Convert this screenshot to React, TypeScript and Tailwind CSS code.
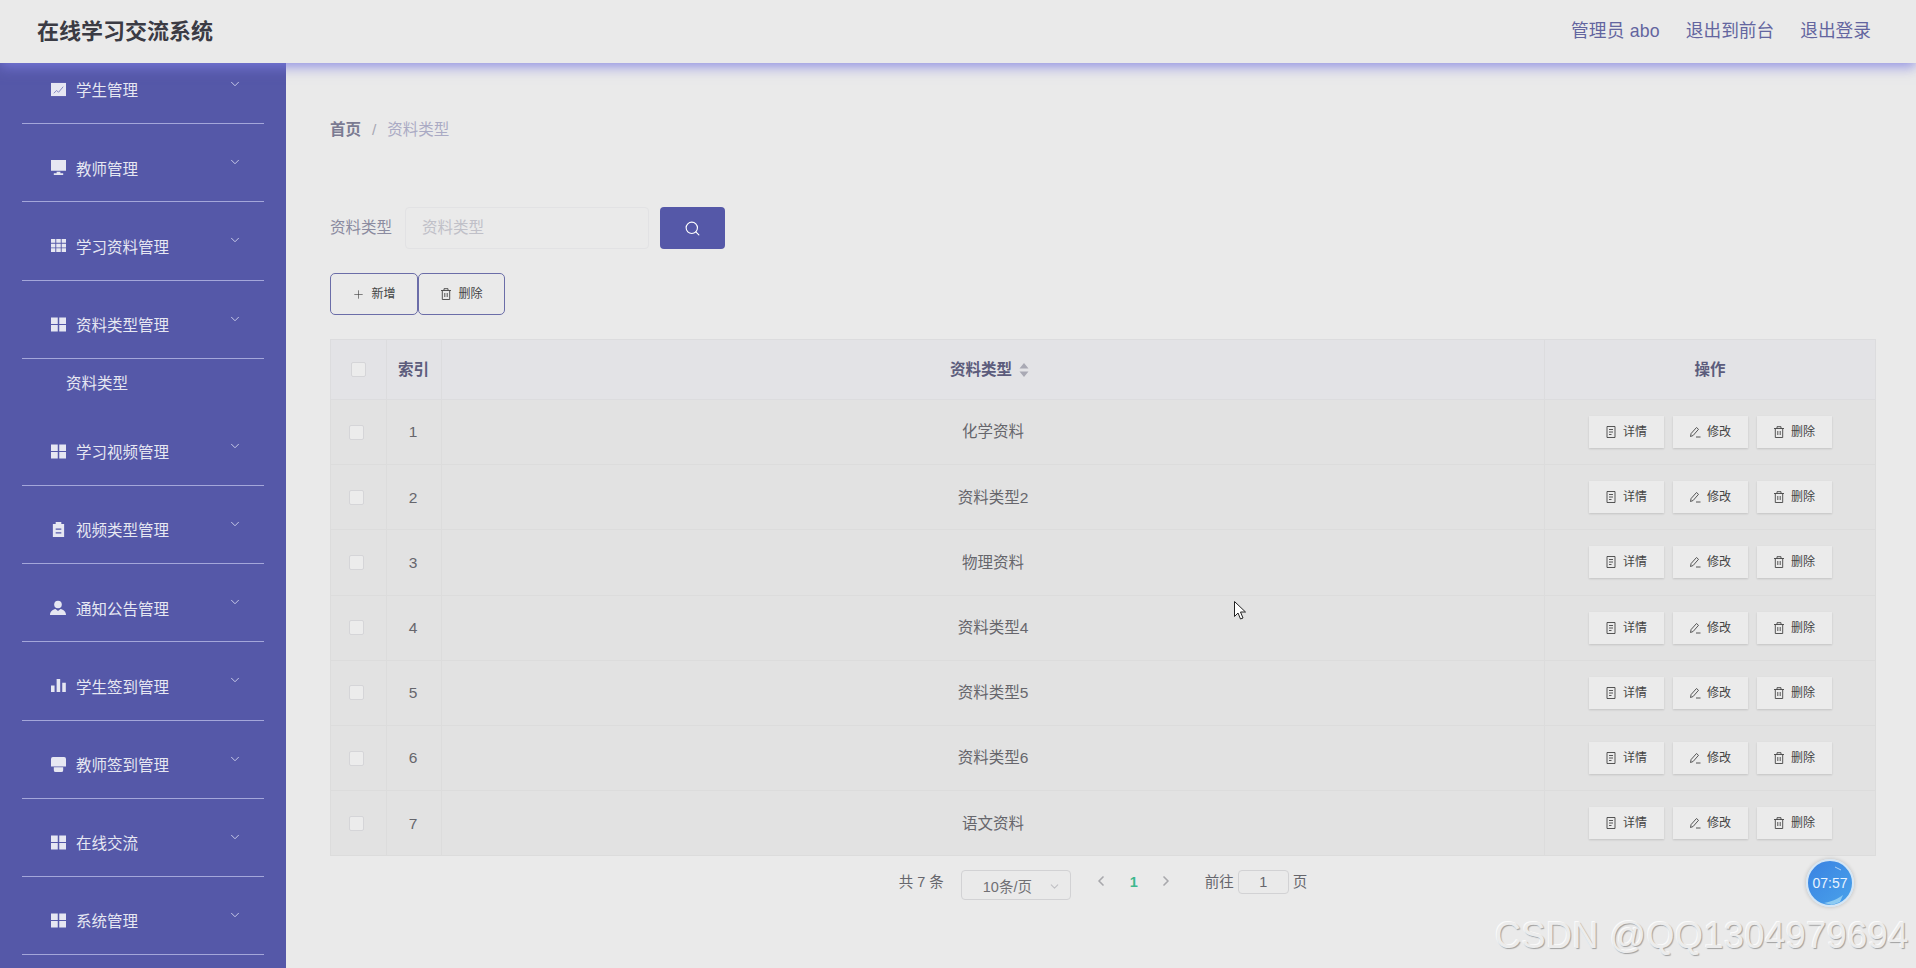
import { ChevronDown, ChevronLeft, ChevronRight, Plus, Search } from 'lucide-react';
import type { ReactNode } from 'react';

const font = '[font-family:"Liberation_Sans","Noto_Sans_CJK_SC",sans-serif]';

const ChartIcon = () => (
  <svg viewBox="0 0 16 16" className="w-[15px] h-[15px]">
    <path fill="#e6e7f2" d="M0 1h16v14H0z" />
    <path fill="none" stroke="#7f82bd" strokeWidth="1" d="M3 12l3-3 2 2 5-6" />
  </svg>
);
const MonitorIcon = () => (
  <svg viewBox="0 0 16 16" className="w-[15px] h-[15px]">
    <path fill="#e6e7f2" d="M0 0h16v11.500H0zM6 12.500h4v1.500h3V16H3v-2h3z" />
  </svg>
);
const Grid3Icon = () => (
  <svg viewBox="0 0 16 16" className="w-[15px] h-[15px]">
    <path fill="#e6e7f2" d="M0 1h4.600v4H0zM5.600 1h4.800v4H5.600zM11.400 1H16v4h-4.600zM0 6h4.600v4H0zM5.600 6h4.800v4H5.600zM11.400 6H16v4h-4.600zM0 11h4.600v4H0zM5.600 11h4.800v4H5.600zM11.400 11H16v4h-4.600z" />
  </svg>
);
const Grid2Icon = () => (
  <svg viewBox="0 0 16 16" className="w-[15px] h-[15px]">
    <path fill="#e6e7f2" d="M0 .500h7.200v7H0zM8.800 .500H16v7H8.800zM0 8.500h7.200v7H0zM8.800 8.500H16v7H8.800z" />
  </svg>
);
const ClipboardIcon = () => (
  <svg viewBox="0 0 16 16" className="w-[15px] h-[15px]">
    <path fill="#e6e7f2" fillRule="evenodd" d="M2 2h3V0h6v2h3v14H2zM5 7v1.300h6V7zM5 11v1.300h6V11z" />
  </svg>
);
const UserIcon = () => (
  <svg viewBox="0 0 16 16" className="w-[16px] h-[16px]">
    <circle cx="8" cy="4.500" r="3.800" fill="#e6e7f2" />
    <path fill="#e6e7f2" d="M0 15c0-3.500 2.500-5.500 5.500-6L8 11l2.500-2c3 .5 5.500 2.500 5.500 6z" />
  </svg>
);
const BarsIcon = () => (
  <svg viewBox="0 0 16 16" className="w-[15px] h-[15px]">
    <path fill="#e6e7f2" d="M0 8h3.800v7H0zM6 1h3.800v14H6zM12 5h3.800v10H12z" />
  </svg>
);
const TrayIcon = () => (
  <svg viewBox="0 0 16 16" className="w-[15px] h-[15px]">
    <path fill="#e6e7f2" d="M2 0h12a2 2 0 0 1 2 2v8H0V2a2 2 0 0 1 2-2zM3 11h10v3a2 2 0 0 1-2 2H5a2 2 0 0 1-2-2z" />
  </svg>
);

const DocIcon = () => (
  <svg viewBox="0 0 12 12" className="w-[12px] h-[12px]" fill="none" stroke="#444" strokeWidth="0.9">
    <path d="M2 .5h8v11H2zM4 3.500h4M4 6h4M4 8.500h2.500" />
  </svg>
);
const PenIcon = () => (
  <svg viewBox="0 0 12 12" className="w-[12px] h-[12px]" fill="none" stroke="#444" strokeWidth="0.9">
    <path d="M1.500 10.500l.6-3L7.500 1.500l2 1.800-5.400 6.200zM7 11h4.500" />
  </svg>
);
const BinIcon = () => (
  <svg viewBox="0 0 12 12" className="w-[12px] h-[12px]" fill="none" stroke="#444" strokeWidth="0.9">
    <path d="M1 2.500h10M4 2.500V.7h4v1.800M2.300 2.500v9h7.400v-9M4.800 5v4M7.200 5v4" />
  </svg>
);

const MenuItem = ({ icon, label }: { icon: ReactNode; label: string }) => (
  <div className="relative h-[78.2px] mx-[22px] border-b border-[#a4a7da] shrink-0">
    <div className="absolute left-[28px] top-[36px] flex items-center gap-[10px] h-[18px] text-[15.5px] text-[#e6e7f2]">
      <span className="w-[16px] flex justify-center -mt-[3px]">{icon}</span>
      <span>{label}</span>
    </div>
    <ChevronDown className="absolute right-[22px] top-[31px] w-[14px] h-[14px] text-[#d5d7ef]" strokeWidth={1.500} />
  </div>
);

const rows = ['化学资料', '资料类型2', '物理资料', '资料类型4', '资料类型5', '资料类型6', '语文资料'];

const Checkbox = ({ className }: { className?: string }) => (
  <span className={`block w-[15px] h-[15px] rounded-[2px] border border-[#d5d5d8] bg-[#ececec] ${className ?? ''}`} />
);

const ActionButton = ({ icon, label }: { icon: ReactNode; label: string }) => (
  <button className="flex items-center justify-center gap-[6px] w-[75px] h-[32px] bg-[#ebebeb] text-[12px] text-[#444] shadow-[0_1px_2px_rgba(0,0,0,0.14)]">
    {icon}
    {label}
  </button>
);

export default function App() {
  return (
    <div className={`relative h-screen overflow-hidden flex flex-col bg-[#eaeaea] ${font}`}>
      <header className="relative z-10 h-[63px] shrink-0 flex items-center justify-between pl-[37px] pr-[45px] bg-[#eaeaea] shadow-[0_4px_12px_rgba(125,125,225,0.8)]">
        <div className="text-[22px] font-bold text-[#3b3b44]">在线学习交流系统</div>
        <div className="flex items-center gap-[26px] text-[17.7px] text-[#63659f]">
          <span className="tracking-[0.2px]">管理员 abo</span>
          <span>退出到前台</span>
          <span>退出登录</span>
        </div>
      </header>

      <div className="flex flex-1 min-h-0">
        <aside className="w-[286px] shrink-0 bg-[#5558a8] overflow-hidden flex flex-col">
          <div className="-mt-[17px] flex flex-col">
            <MenuItem icon={<ChartIcon />} label="学生管理" />
            <MenuItem icon={<MonitorIcon />} label="教师管理" />
            <MenuItem icon={<Grid3Icon />} label="学习资料管理" />
            <MenuItem icon={<Grid2Icon />} label="资料类型管理" />
            <div className="h-[49px] shrink-0 pl-[66px] pt-[14px] text-[15.5px] leading-[22px] text-[#e6e7f2]">资料类型</div>
            <MenuItem icon={<Grid2Icon />} label="学习视频管理" />
            <MenuItem icon={<ClipboardIcon />} label="视频类型管理" />
            <MenuItem icon={<UserIcon />} label="通知公告管理" />
            <MenuItem icon={<BarsIcon />} label="学生签到管理" />
            <MenuItem icon={<TrayIcon />} label="教师签到管理" />
            <MenuItem icon={<Grid2Icon />} label="在线交流" />
            <MenuItem icon={<Grid2Icon />} label="系统管理" />
          </div>
        </aside>

        <main className="flex-1 min-w-0 pl-[44px] pr-[40px] pt-[56px]">
          <div className="flex items-center h-[22px] text-[15.5px]">
            <span className="font-bold text-[#7b7b92]">首页</span>
            <span className="mx-[11px] text-[#a8a8b4]">/</span>
            <span className="text-[#aaaac4]">资料类型</span>
          </div>

          <div className="mt-[66px] flex items-center h-[42px]">
            <span className="w-[75px] text-[15.5px] text-[#8b8ba0]">资料类型</span>
            <div className="w-[244px] h-[42px] flex items-center pl-[16px] rounded-[4px] border border-[#e2e2e4] text-[15.5px] text-[#c0c0c8]">资料类型</div>
            <button className="ml-[11px] w-[65px] h-[42px] flex items-center justify-center rounded-[4px] bg-[#5558a8]">
              <Search className="w-[17px] h-[17px] text-white" strokeWidth={1.600} />
            </button>
          </div>

          <div className="mt-[24px] flex">
            <button className="w-[88px] h-[42px] flex items-center justify-center gap-[6px] rounded-[5px] border border-[#6b6da8] text-[12px] text-[#444]">
              <Plus className="w-[13px] h-[13px]" strokeWidth={1.200} />
              新增
            </button>
            <button className="w-[87px] h-[42px] flex items-center justify-center gap-[6px] rounded-[5px] border border-[#6b6da8] text-[12px] text-[#444]">
              <BinIcon />
              删除
            </button>
          </div>

          <table className="mt-[24px] w-full table-fixed border-collapse text-[15.5px]">
            <colgroup>
              <col className="w-[56px]" />
              <col className="w-[55px]" />
              <col />
              <col className="w-[331px]" />
            </colgroup>
            <thead>
              <tr className="h-[60px] bg-[#e3e3e6] text-[#5c5c7c] font-bold">
                <th className="border border-[#dcdcde]"><Checkbox className="ml-[20px]" /></th>
                <th className="border border-[#dcdcde] pr-[1px]">索引</th>
                <th className="border border-[#dcdcde] pr-[7px]">
                  <span className="inline-flex items-center gap-[7px]">
                    资料类型
                    <svg viewBox="0 0 10 14" className="w-[10px] h-[14px]">
                      <path fill="#a9a9b4" d="M5 0l4.500 5.500h-9zM5 14L.5 8.500h9z" />
                    </svg>
                  </span>
                </th>
                <th className="border border-[#dcdcde]">操作</th>
              </tr>
            </thead>
            <tbody>
              {rows.map((name, i) => (
                <tr key={name} className="h-[65.2px] bg-[#e2e2e2] text-center text-[#66666c]">
                  <td className="border border-[#dcdcdc]"><Checkbox className="ml-[18px]" /></td>
                  <td className="border border-[#dcdcdc] pr-[2px]">{i + 1}</td>
                  <td className="border border-[#dcdcdc]">{name}</td>
                  <td className="border border-[#dcdcdc]">
                    <div className="flex justify-center gap-[9px]">
                      <ActionButton icon={<DocIcon />} label="详情" />
                      <ActionButton icon={<PenIcon />} label="修改" />
                      <ActionButton icon={<BinIcon />} label="删除" />
                    </div>
                  </td>
                </tr>
              ))}
            </tbody>
          </table>

          <div className="mt-[14px] flex justify-center items-start text-[14.5px] text-[#66666c]">
            <span className="leading-[24px] w-[62px]">共 7 条</span>
            <div className="relative w-[110px] h-[30px] rounded-[4px] border border-[#d2d2d4] pl-[21px] pt-[4px] leading-[24px] text-[#707074]">
              10条/页
              <ChevronDown className="absolute right-[9px] top-[9px] w-[13px] h-[13px] text-[#c0c0c4]" />
            </div>
            <ChevronLeft className="ml-[22px] mt-[3px] w-[16px] h-[16px] text-[#a8a8ac]" strokeWidth={2.500} />
            <span className="ml-[17px] w-[16px] text-center leading-[24px] font-bold text-[#3eb88e]">1</span>
            <ChevronRight className="ml-[16px] mt-[3px] w-[16px] h-[16px] text-[#a8a8ac]" strokeWidth={2.500} />
            <span className="ml-[31px] leading-[24px]">前往</span>
            <div className="ml-[4px] w-[51px] h-[24px] rounded-[4px] border border-[#d2d2d4] text-center leading-[22px]">1</div>
            <span className="ml-[4px] leading-[24px]">页</span>
          </div>
        </main>
      </div>

      <div className="absolute left-[1806px] top-[859px] w-[48px] h-[48px] rounded-full overflow-hidden border-[2px] border-[#d5e6f5] bg-gradient-to-br from-[#3a82e2] to-[#4aa2ea] shadow-[0_0_4px_rgba(0,0,0,0.2)] flex items-center justify-center text-[14px] text-[#e8f3ff]">
        07:57
        <svg viewBox="0 0 44 44" className="absolute inset-0 w-full h-full">
          <path fill="none" stroke="#cfe4fa" strokeWidth="0.8" d="M27 6l6 3" />
          <path fill="#8ecbf2" d="M16 42c6-1 12-3 19-8l-3 7-8 3z" />
        </svg>
      </div>

      <div className="absolute left-[1495px] top-[914px] text-[36px] leading-[44px] tracking-[0.5px] whitespace-nowrap text-[#ececec] [text-shadow:1px_1px_1px_rgba(0,0,0,0.32),-1px_-1px_0_rgba(255,255,255,0.8)]">
        CSDN @QQ1304979694
      </div>

      <svg viewBox="0 0 12 19" className="absolute left-[1234px] top-[601px] w-[12px] h-[19px]">
        <path fill="#fff" stroke="#222" strokeWidth="1" d="M.5.5v15l3.500-3.500 2.500 6 2.500-1-2.500-6h5z" />
      </svg>
    </div>
  );
}
